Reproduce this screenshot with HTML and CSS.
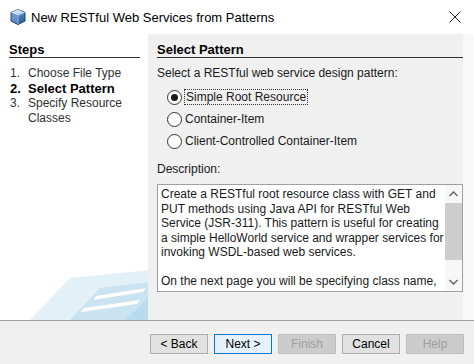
FILE: index.html
```html
<!DOCTYPE html>
<html>
<head>
  <title>New RESTful Web Services from Patterns</title>
  <link rel="stylesheet" href="styles.css">
</head>
<body>
  <div class="window">
    <div class="titlebar">
      <svg class="app-icon" width="18" height="18" viewBox="0 0 18 18">
        <defs>
          <linearGradient id="cubeTop" x1="0" y1="0" x2="1" y2="1">
            <stop offset="0" stop-color="#e8f2fb"/>
            <stop offset="1" stop-color="#9fc3e6"/>
          </linearGradient>
          <linearGradient id="cubeSide" x1="0" y1="0" x2="0" y2="1">
            <stop offset="0" stop-color="#5b8fc8"/>
            <stop offset="1" stop-color="#2c5c9a"/>
          </linearGradient>
        </defs>
        <path d="M9 1.5 L16 4.5 L16 13 L9 16.5 L2 13 L2 4.5 Z" fill="url(#cubeSide)" stroke="#1f3f6a" stroke-width="1"/>
        <path d="M9 1.5 L16 4.5 L9 7.8 L2 4.5 Z" fill="url(#cubeTop)"/>
        <path d="M9 7.8 L9 16" stroke="#a9c8e8" stroke-width="1"/>
        <path d="M2.5 5 L8.5 8 L8.5 15.5 L2.5 12.6 Z" fill="#7fa9d8" opacity="0.6"/>
      </svg>
      <span class="title">New RESTful Web Services from Patterns</span>
      <svg class="close" width="12" height="12" viewBox="0 0 12 12">
        <path d="M0.5 0.5 L11.5 11.5 M11.5 0.5 L0.5 11.5" stroke="#222" stroke-width="1"/>
      </svg>
    </div>

    <div class="main">
      <div class="steps">
        <div class="heading">Steps</div>
        <ol class="step-list">
          <li><span class="num">1.</span><span>Choose File Type</span></li>
          <li class="current"><span class="num">2.</span><span>Select Pattern</span></li>
          <li><span class="num">3.</span><span>Specify Resource Classes</span></li>
        </ol>
        <svg class="watermark" width="148" height="50" viewBox="0 0 148 50">
          <path d="M30 50 L70 8 L150 0 L150 50 Z" fill="#e2f0f8"/>
          <path d="M70 50 L100 18 L150 12 L150 50 Z" fill="#c9e3f1"/>
          <path d="M84 38 L140 30 L137 34 L81 42 Z" fill="#ffffff"/>
          <path d="M96 26 L146 18 L143 22 L93 30 Z" fill="#ffffff"/>
          <path d="M125 50 L150 26 L150 50 Z" fill="#b9dbee"/>
        </svg>
      </div>

      <div class="content">
        <div class="heading">Select Pattern</div>
        <p class="prompt">Select a RESTful web service design pattern:</p>
        <div class="radios">
          <label class="radio"><span class="dot checked"></span><span class="focus">Simple Root Resource</span></label>
          <label class="radio"><span class="dot"></span><span>Container-Item</span></label>
          <label class="radio"><span class="dot"></span><span>Client-Controlled Container-Item</span></label>
        </div>
        <p class="desc-label">Description:</p>
        <div class="desc-box">
          <div class="desc-text">
            <p>Create a RESTful root resource class with GET and PUT methods using Java API for RESTful Web Service (JSR-311). This pattern is useful for creating a simple HelloWorld service and wrapper services for invoking WSDL-based web services.</p>
            <p>On the next page you will be specifying class name, URI and representation type of the resource.</p>
          </div>
          <div class="scrollbar">
            <svg class="arrow" width="9" height="6" viewBox="0 0 9 6"><path d="M0.5 5 L4.5 1 L8.5 5" fill="none" stroke="#606060" stroke-width="1.3"/></svg>
            <div class="thumb"></div>
            <svg class="arrow" width="9" height="6" viewBox="0 0 9 6"><path d="M0.5 1 L4.5 5 L8.5 1" fill="none" stroke="#606060" stroke-width="1.3"/></svg>
          </div>
        </div>
      </div>

      <div class="edge"></div>
    </div>

    <div class="buttons">
      <button class="btn">&lt; Back</button>
      <button class="btn default">Next &gt;</button>
      <button class="btn" disabled>Finish</button>
      <button class="btn">Cancel</button>
      <button class="btn" disabled>Help</button>
    </div>
  </div>
</body>
</html>
```

FILE: styles.css
```css
body {
  margin: 0;
  font-family: "Liberation Sans", Arial, sans-serif;
  font-size: 12px;
  color: #1a1a1a;
}

.window {
  width: 474px;
  height: 364px;
  display: flex;
  flex-direction: column;
  background-color: #ffffff;
  overflow: hidden;
}

.titlebar {
  height: 34px;
  display: flex;
  align-items: center;
  padding-left: 9px;
  padding-right: 13px;
  background-color: #ffffff;
}

.titlebar .title {
  margin-left: 4px;
  font-family: "Liberation Sans", Arial, sans-serif;
  font-size: 13px;
  color: #000000;
  flex: 1;
}

.main {
  height: 286px;
  display: flex;
  border-bottom: 1px solid #a0a0a0;
}

.heading {
  font-size: 13px;
  font-weight: bold;
  color: #000000;
  padding-top: 8px;
  border-bottom: 1px solid #303030;
  line-height: 15px;
}

.steps {
  width: 148px;
  position: relative;
  padding: 0 8px 0 9px;
  box-sizing: border-box;
  background-color: #ffffff;
}

.step-list {
  list-style: none;
  margin: 8px 0 0 1px;
  padding: 0;
  line-height: 15px;
  color: #303030;
}

.step-list li {
  display: flex;
}

.step-list .num {
  width: 18px;
  flex: none;
}

.step-list .current {
  font-size: 13px;
  font-weight: bold;
  color: #000000;
}

.steps .watermark {
  position: absolute;
  left: 0;
  bottom: 0;
}

.content {
  width: 315px;
  box-sizing: border-box;
  padding: 0 0 0 9px;
  background-color: #f0f0f0;
}

.content p {
  margin: 0;
}

.prompt {
  margin-top: 8px !important;
  line-height: 15px;
}

.radios {
  display: flex;
  flex-direction: column;
  margin-top: 5px;
  padding-left: 10px;
}

.radio {
  display: flex;
  align-items: center;
  height: 22px;
}

.radio .dot {
  width: 13px;
  height: 13px;
  border: 1px solid #333333;
  border-radius: 50%;
  background-color: #ffffff;
  margin-right: 3px;
  position: relative;
  flex: none;
}

.radio .dot.checked::after {
  content: "";
  position: absolute;
  left: 3px;
  top: 3px;
  width: 7px;
  height: 7px;
  border-radius: 50%;
  background-color: #1a1a1a;
}

.radio .focus {
  outline: 1px dotted #333333;
  padding: 0 1px;
}

.desc-label {
  margin-top: 10px !important;
  line-height: 15px;
}

.desc-box {
  margin-top: 7px;
  height: 108px;
  display: flex;
  border: 1px solid #a0a0a0;
  background-color: #ffffff;
  box-sizing: border-box;
  overflow: hidden;
}

.desc-text {
  flex: 1;
  padding: 2px 0 0 3px;
  line-height: 14.5px;
  color: #1a1a1a;
}

.desc-text p + p {
  margin-top: 14.5px !important;
}

.scrollbar {
  width: 17px;
  flex: none;
  display: flex;
  flex-direction: column;
  align-items: center;
  background-color: #f7f7f7;
}

.scrollbar .arrow {
  margin: 6px 0;
}

.scrollbar .thumb {
  width: 17px;
  height: 57px;
  background-color: #cdcdcd;
}

.scrollbar .arrow:last-child {
  margin-top: auto;
}

.edge {
  flex: 1;
  background-color: #f8f8f8;
}

.buttons {
  flex: 1;
  display: flex;
  justify-content: flex-end;
  align-items: flex-start;
  gap: 6px;
  padding: 13px 10px 0 0;
  background-color: #f0f0f0;
}

.btn {
  width: 58px;
  height: 20px;
  padding: 0;
  font-family: "Liberation Sans", Arial, sans-serif;
  font-size: 12px;
  color: #000000;
  background-color: #e1e1e1;
  border: 1px solid #adadad;
}

.btn.default {
  border-color: #0078d7;
  background-color: #e5f1fb;
  box-shadow: inset 0 0 0 1px #e5f1fb;
}

.btn:disabled {
  color: #a0a0a0;
  background-color: #cccccc;
  border-color: #bfbfbf;
}
```
